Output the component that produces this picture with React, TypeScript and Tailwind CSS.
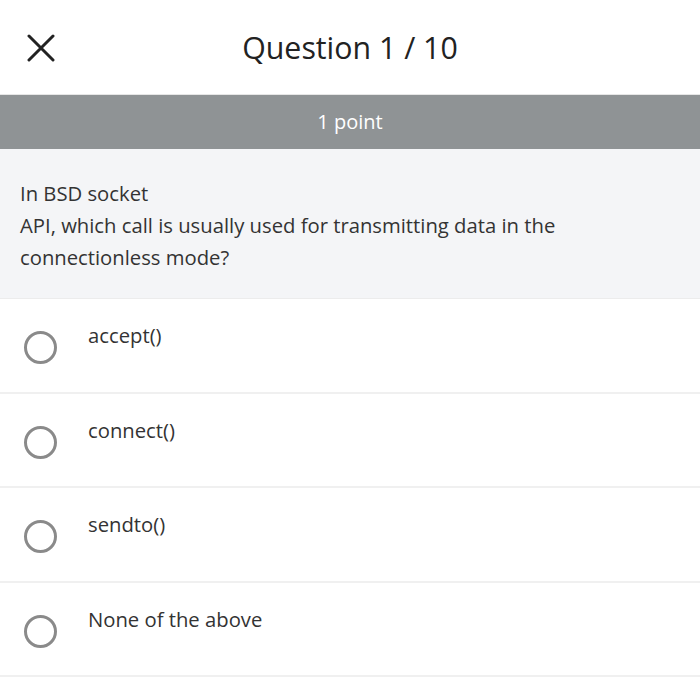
const options = ["accept()", "connect()", "sendto()", "None of the above"];

function CloseIcon() {
  return (
    <svg width="28" height="28" viewBox="0 0 28 28" fill="none">
      <path d="M2 2 L26 26 M26 2 L2 26" stroke="#222" strokeWidth="3" strokeLinecap="round" />
    </svg>
  );
}

export default function App() {
  return (
    <div className="w-[700px] h-[682px] bg-white overflow-hidden font-['Open_Sans',sans-serif]">
      <header className="h-[95px] grid grid-cols-[1fr_auto_1fr] items-center border-b border-[#e6e6e6]">
        <div className="pl-[27px] pt-[1px] flex">
          <CloseIcon />
        </div>
        <h1 className="text-[30.3px] text-[#222] leading-none mt-[2px]">Question 1 / 10</h1>
        <div />
      </header>

      <div className="h-[54px] bg-[#8f9395] flex items-center justify-center">
        <span className="text-white text-[20px]">1 point</span>
      </div>

      <section className="bg-[#f4f5f7] px-5 pt-[28px] pb-[25px] border-b border-[#ececec]">
        <p className="text-[20.25px] leading-8 text-[#333]">
          In BSD socket
          <br />
          API, which call is usually used for transmitting data in the connectionless mode?
        </p>
      </section>

      <ul>
        {options.map((opt) => (
          <li
            key={opt}
            className="h-[94.5px] flex items-start gap-[31px] pl-6 pt-[20px] border-b-2 border-[#f0f0f0]"
          >
            <span className="mt-[12px] w-[33px] h-[33px] rounded-full border-[3px] border-[#8a8a8a] shrink-0" />
            <span className="text-[20.25px] leading-8 text-[#333]">{opt}</span>
          </li>
        ))}
      </ul>
    </div>
  );
}
